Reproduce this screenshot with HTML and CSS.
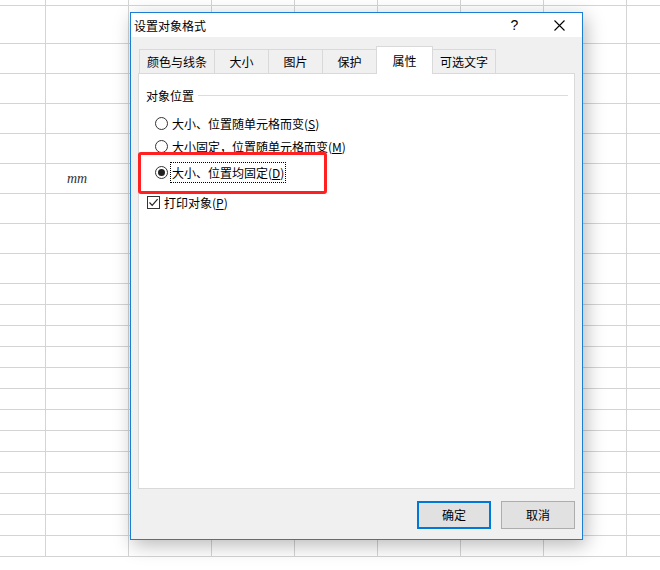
FILE: index.html
```html
<!DOCTYPE html>
<html lang="zh-CN">
<head>
    <meta charset="UTF-8">
    <meta name="viewport" content="width=device-width, initial-scale=1.0">
    <title>设置对象格式</title>
    <link rel="stylesheet" href="styles.css">
</head>
<body>
    <!-- Лист таблицы на фоне -->
    <div class="sheet">
        <div class="row row-first"></div>
        <div class="row row-tall"></div>
        <div class="row"></div>
        <div class="row"></div>
        <div class="row"></div>
        <div class="row"></div>
        <div class="row"><span class="cell-text">mm</span></div>
        <div class="row"></div>
        <div class="row"></div>
        <div class="row"></div>
        <div class="row row-small"></div>
        <div class="row row-small"></div>
        <div class="row row-small"></div>
        <div class="row row-small"></div>
        <div class="row row-small"></div>
        <div class="row row-small"></div>
        <div class="row row-small"></div>
        <div class="row row-small"></div>
        <div class="row row-small"></div>
        <div class="row row-small"></div>
        <div class="row row-small"></div>
        <div class="row row-small"></div>
        <div class="row row-small"></div>
    </div>

    <div class="dialog">
        <div class="titlebar">
            <span class="title">设置对象格式</span>
            <span class="tb-btn help">?</span>
            <span class="tb-btn close">
                <svg width="11" height="11" viewBox="0 0 11 11">
                    <path d="M0.5 0.5 L10.5 10.5 M10.5 0.5 L0.5 10.5" stroke="#000" stroke-width="1.1" fill="none"/>
                </svg>
            </span>
        </div>

        <div class="dialog-body">
            <div class="tabs">
                <div class="tab">颜色与线条</div>
                <div class="tab">大小</div>
                <div class="tab">图片</div>
                <div class="tab">保护</div>
                <div class="tab active">属性</div>
                <div class="tab">可选文字</div>
            </div>

            <div class="panel">
                <div class="group-title">
                    <span>对象位置</span>
                    <span class="group-line"></span>
                </div>

                <div class="option opt-1">
                    <span class="radio"></span>
                    <span class="label">大小、位置随单元格而变(<u>S</u>)</span>
                </div>
                <div class="option opt-2">
                    <span class="radio"></span>
                    <span class="label">大小固定，位置随单元格而变(<u>M</u>)</span>
                </div>
                <div class="option opt-3">
                    <span class="radio checked"></span>
                    <span class="label focused">大小、位置均固定(<u>D</u>)</span>
                </div>
                <div class="option check-row">
                    <span class="checkbox">
                        <svg width="11" height="11" viewBox="0 0 11 11">
                            <path d="M1.5 5.5 L4.2 8.3 L9.6 2.2" stroke="#222" stroke-width="1.2" fill="none"/>
                        </svg>
                    </span>
                    <span class="label">打印对象(<u>P</u>)</span>
                </div>
            </div>

            <div class="buttons">
                <div class="btn default">确定</div>
                <div class="btn">取消</div>
            </div>
        </div>
    </div>

    <!-- Красная рамка-выделение -->
    <div class="mark"></div>
</body>
</html>
```

FILE: styles.css
```css
* {
    margin: 0;
    padding: 0;
    box-sizing: border-box;
}

body {
    width: 660px;
    height: 570px;
    overflow: hidden;
    background: #fff;
    font-family: 'Noto Sans CJK SC', 'Noto Sans', sans-serif;
    font-size: 12px;
    color: #000;
    position: relative;
}

/* Сетка листа */
.sheet {
    background-image: repeating-linear-gradient(90deg,
        transparent 0, transparent 45px,
        #d4d4d4 45px, #d4d4d4 46px,
        transparent 46px, transparent 83px);
}

.row {
    height: 30px;
    border-bottom: 1px solid #d4d4d4;
}

.row-first {
    height: 6px;
}

.row-tall {
    height: 38px;
}

.row-small {
    height: 21px;
}

.cell-text {
    display: block;
    padding-left: 67px;
    line-height: 29px;
    font-family: 'Liberation Serif', serif;
    font-style: italic;
    font-size: 14px;
    color: #333;
}

/* Окно диалога */
.dialog {
    position: absolute;
    left: 130px;
    top: 12px;
    width: 453px;
    height: 528px;
    border: 1px solid #1a7fd4;
    background: #f0f0f0;
    box-shadow: 3px 5px 18px rgba(0, 0, 0, 0.28);
    display: flex;
    flex-direction: column;
}

.titlebar {
    height: 24px;
    background: #fff;
    display: flex;
    align-items: center;
    padding-left: 3px;
}

.title {
    flex: 1;
    font-size: 12px;
}

.tb-btn {
    width: 45px;
    height: 24px;
    display: flex;
    justify-content: center;
    align-items: center;
}

.help {
    font-family: 'Liberation Sans', sans-serif;
    font-size: 14px;
}

.dialog-body {
    flex: 1;
    padding: 12px 7px 0 7px;
}

.tabs {
    display: flex;
    align-items: flex-end;
    height: 24px;
    padding-left: 1px;
}

.tab {
    min-width: 55px;
    height: 24px;
    padding: 0 7px;
    border: 1px solid #d9d9d9;
    border-bottom: none;
    margin-left: -1px;
    background: #f0f0f0;
    text-align: center;
    line-height: 23px;
}

.tab:first-child {
    margin-left: 0;
}

.tab.active {
    min-width: 57px;
    height: 28px;
    margin-bottom: -1px;
    background: #fff;
    line-height: 28px;
    position: relative;
    z-index: 1;
}

.panel {
    height: 416px;
    background: #fff;
    border: 1px solid #d9d9d9;
    padding: 11px 6px 0 7px;
}

.group-title {
    display: flex;
    align-items: center;
    height: 20px;
}

.group-line {
    flex: 1;
    height: 1px;
    background: #dcdcdc;
    margin-left: 4px;
}

.option {
    display: flex;
    align-items: center;
    height: 20px;
    margin-left: 9px;
}

.opt-1 {
    margin-top: 8px;
}

.opt-2 {
    margin-top: 3px;
}

.opt-3 {
    margin-top: 6px;
}

.check-row {
    margin-top: 10px;
    margin-left: 1px;
}

.radio {
    width: 13px;
    height: 13px;
    border: 1px solid #333;
    border-radius: 50%;
    background: #fff;
    margin-right: 2px;
    display: flex;
    justify-content: center;
    align-items: center;
}

.radio.checked::after {
    content: '';
    width: 7px;
    height: 7px;
    border-radius: 50%;
    background: #222;
}

.checkbox {
    width: 13px;
    height: 13px;
    border: 1px solid #333;
    background: #fff;
    margin-right: 2px;
    display: flex;
    justify-content: center;
    align-items: center;
}

.label {
    border: 1px solid transparent;
    padding: 0 1px;
    line-height: 19px;
    white-space: nowrap;
}

.label u {
    text-underline-offset: 1px;
}

.label.focused {
    border: 1px dotted #000;
}

.buttons {
    display: flex;
    justify-content: flex-end;
    gap: 10px;
    margin-top: 12px;
}

.btn {
    width: 74px;
    height: 28px;
    border: 1px solid #adadad;
    background: #e1e1e1;
    text-align: center;
    line-height: 26px;
}

.btn.default {
    border: 2px solid #0078d7;
    line-height: 24px;
}

/* Красная рамка поверх диалога */
.mark {
    position: absolute;
    left: 138px;
    top: 152px;
    width: 189px;
    height: 42px;
    border: 3px solid #ff2121;
    border-radius: 3px;
}
```
